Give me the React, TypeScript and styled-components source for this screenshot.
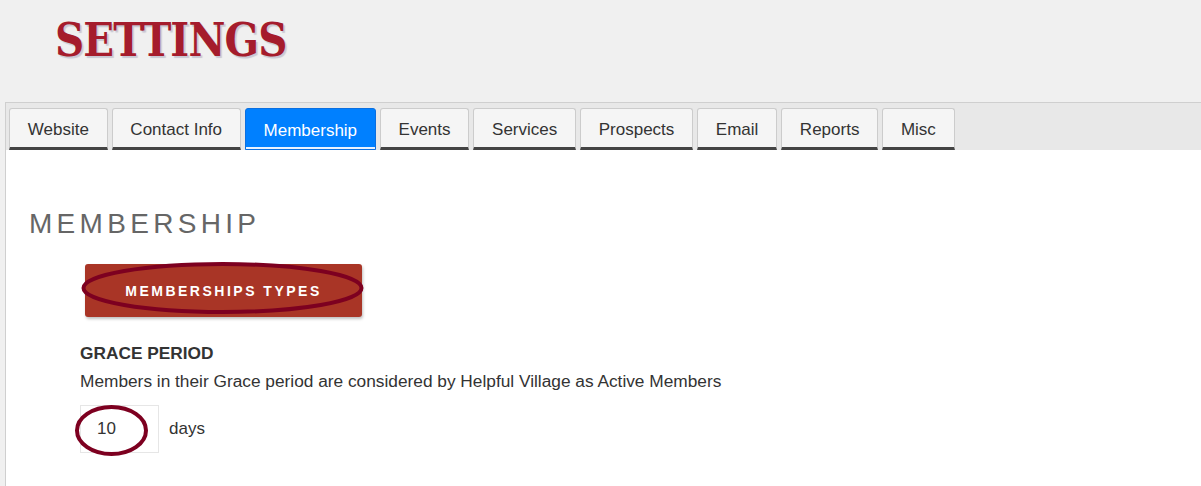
import styled, { createGlobalStyle } from 'styled-components'

const GlobalStyle = createGlobalStyle`
  body {
    margin: 0;
    background: #f0f0f0;
    font-family: "Liberation Sans", Arial, sans-serif;
    color: #333;
  }
`

const Header = styled.header`
  height: 102px;
  padding: 14px 0 0 55px;
  box-sizing: border-box;
`

const Title = styled.h1`
  display: inline-block;
  margin: 0;
  font-family: "DejaVu Serif", serif;
  font-weight: 700;
  font-size: 46px;
  line-height: 52px;
  letter-spacing: -1px;
  color: #a51c2c;
  text-shadow: 2px 2px 1px #c9c9d4;
  transform: scaleX(0.88);
  transform-origin: left center;
`

const Panel = styled.div`
  margin-left: 5px;
  border-top: 1px solid #cfcfcf;
  border-left: 1px solid #cfcfcf;
  background: #fff;
  min-height: 383px;
`

const TabBar = styled.nav`
  display: flex;
  align-items: flex-end;
  gap: 4px;
  padding: 5px 0 0 3px;
  background: #e8e8e8;
`

const Tab = styled.div<{ $active?: boolean }>`
  height: 42px;
  box-sizing: border-box;
  padding: 3px 17.75px 0;
  display: flex;
  align-items: center;
  font-size: 17px;
  border: 1px solid ${p => (p.$active ? '#0b6fe0' : '#cccccc')};
  border-bottom: ${p => (p.$active ? '1px solid #0b6fe0' : '3px solid #444')};
  border-radius: 3px 3px 0 0;
  background: ${p => (p.$active ? '#0080ff' : '#f5f5f5')};
  color: ${p => (p.$active ? '#fff' : '#333')};
  box-shadow: ${p => (p.$active ? 'inset 0 -2px 0 #e9f2ff' : 'none')};
`

const Content = styled.section`
  padding: 56px 24px 30px;
`

const SectionTitle = styled.h2`
  margin: 0 0 22px -1px;
  font-size: 28px;
  font-weight: 400;
  letter-spacing: 4.3px;
  line-height: 36px;
  color: #666;
`

const Marked = styled.div`
  position: relative;
  display: inline-block;
`

const Ring = styled.svg`
  position: absolute;
  pointer-events: none;
  overflow: visible;
`

const TypesButton = styled.button`
  margin-left: 55px;
  width: 277px;
  height: 53px;
  border: none;
  border-radius: 3px;
  background: #a93526;
  color: #fff;
  font-family: "Liberation Sans", Arial, sans-serif;
  font-weight: 700;
  font-size: 14px;
  letter-spacing: 2.5px;
  box-shadow: 1px 2px 3px rgba(0, 0, 0, 0.25);
`

const Grace = styled.div`
  padding: 26px 0 0 50px;
`

const Label = styled.h3`
  margin: 0 0 8px;
  font-size: 17.3px;
  font-weight: 700;
  line-height: 20px;
  color: #333;
`

const Note = styled.p`
  margin: 0 0 14px;
  font-size: 17.3px;
  line-height: 20px;
  color: #333;
`

const Row = styled.div`
  display: flex;
  align-items: center;
  gap: 10px;
`

const DaysInput = styled.input`
  width: 79px;
  height: 48px;
  box-sizing: border-box;
  border: 1px solid #e6e6e6;
  padding: 0 0 0 16px;
  font-family: "Liberation Sans", Arial, sans-serif;
  font-size: 17px;
  color: #333;
  background: #fff;
`

const Unit = styled.span`
  font-size: 17px;
  color: #333;
`

const tabs = ['Website', 'Contact Info', 'Membership', 'Events', 'Services', 'Prospects', 'Email', 'Reports', 'Misc']

export default function App() {
  return (
    <>
      <GlobalStyle />
      <Header>
        <Title>SETTINGS</Title>
      </Header>
      <Panel>
        <TabBar>
          {tabs.map(t => (
            <Tab key={t} $active={t === 'Membership'}>
              {t}
            </Tab>
          ))}
        </TabBar>
        <Content>
          <SectionTitle>MEMBERSHIP</SectionTitle>
          <Marked>
            <TypesButton>MEMBERSHIPS TYPES</TypesButton>
            <Ring style={{ left: 52, top: -2, width: 281, height: 52 }} viewBox="0 0 281 52">
              <ellipse cx="140.5" cy="26" rx="139" ry="24" fill="none" stroke="#7d0020" strokeWidth="4" />
            </Ring>
          </Marked>
          <Grace>
            <Label>GRACE PERIOD</Label>
            <Note>Members in their Grace period are considered by Helpful Village as Active Members</Note>
            <Row>
              <Marked>
                <DaysInput defaultValue="10" />
                <Ring style={{ left: -5, top: 0, width: 73, height: 51 }} viewBox="0 0 73 51">
                  <ellipse cx="36.5" cy="25.5" rx="34.5" ry="23.5" fill="none" stroke="#7d0020" strokeWidth="4" />
                </Ring>
              </Marked>
              <Unit>days</Unit>
            </Row>
          </Grace>
        </Content>
      </Panel>
    </>
  )
}
